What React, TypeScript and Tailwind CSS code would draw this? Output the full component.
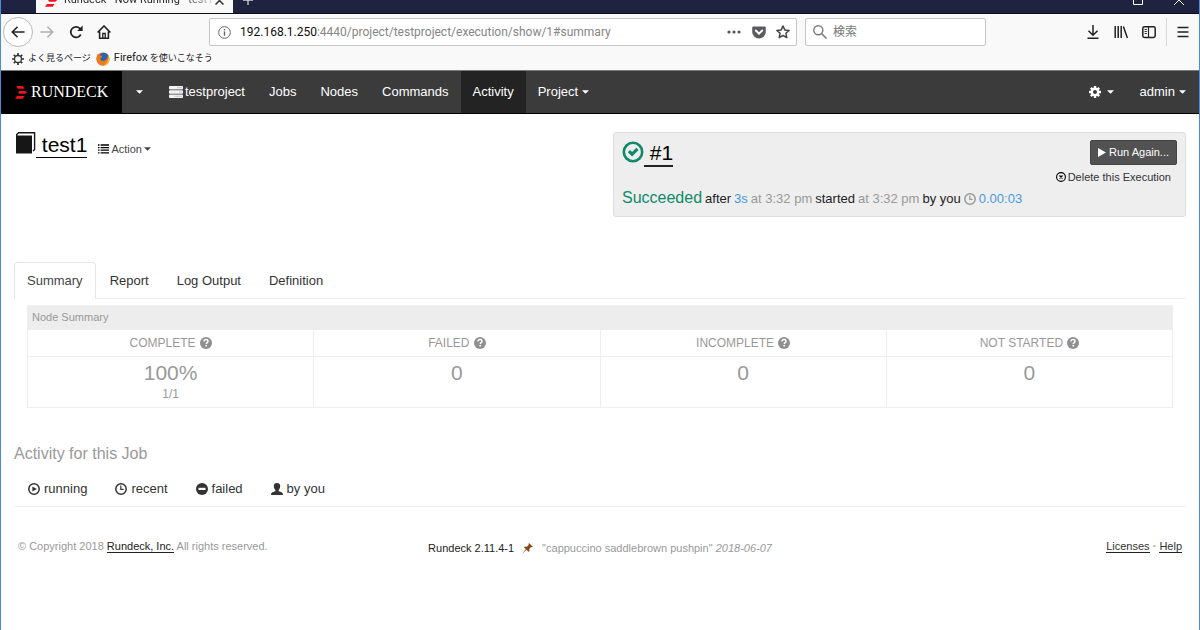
import React from 'react';
import type { ReactNode } from 'react';

type IconProps = { className?: string };

const RundeckMark = ({ className }: IconProps) => (
  <svg className={className} viewBox="0 0 12 13" fill="#f5121d" aria-hidden="true">
    <path d="M1.2 0H7.8L9.6 2.8H3z" />
    <path d="M4.2 5H10.2L12 6.4 10.2 7.8H4.2L3.2 6.4z" />
    <path d="M2 10H9.4L7.8 12.8H0z" />
  </svg>
);

const TasksIcon = ({ className }: IconProps) => (
  <svg className={className} viewBox="0 0 14 12" aria-hidden="true">
    <rect x="0" y="0" width="14" height="3.4" rx="0.8" fill="#f3f3f3" />
    <rect x="0" y="4.3" width="14" height="3.4" rx="0.8" fill="#f3f3f3" />
    <rect x="0" y="8.6" width="14" height="3.4" rx="0.8" fill="#f3f3f3" />
    <path d="M8 1.7h5M10 6H13M5.5 10.3H13" stroke="#b4b4b4" strokeWidth="0.7" />
  </svg>
);

const BookIcon = ({ className }: IconProps) => (
  <svg className={className} viewBox="0 0 20 22" aria-hidden="true">
    <path d="M0 3.5h16V21.5H0z" fill="#161616" />
    <path d="M0.7 4V2.6L2.6 0.8H18.6V17.4L17 19" fill="none" stroke="#161616" strokeWidth="1.4" />
  </svg>
);

const ListIcon = ({ className }: IconProps) => (
  <svg className={className} viewBox="0 0 11 10" fill="none" stroke="currentColor" strokeWidth="1.3" aria-hidden="true">
    <path d="M0 1h1.5M2.6 1H11M0 3.6h1.5M2.6 3.6H11M0 6.2h1.5M2.6 6.2H11M0 8.8h1.5M2.6 8.8H11" />
  </svg>
);

const CheckCircleIcon = ({ className }: IconProps) => (
  <svg className={className} viewBox="0 0 22 22" aria-hidden="true">
    <circle cx="11" cy="11" r="9.2" fill="none" stroke="#0f8a67" strokeWidth="2.6" />
    <path d="M5.8 11.2L8 9l2.1 2L14.4 6.8l2.2 2.1-6.5 6.6z" fill="#0f8a67" />
  </svg>
);

const ClockIcon = ({ className }: IconProps) => (
  <svg className={className} viewBox="0 0 12 12" fill="none" stroke="currentColor" strokeWidth="1.5" aria-hidden="true">
    <circle cx="6" cy="6" r="5.2" />
    <path d="M5.8 2.4v4h2.8" strokeWidth="1.2" />
  </svg>
);

const PlayCircleIcon = ({ className }: IconProps) => (
  <svg className={className} viewBox="0 0 12 12" aria-hidden="true">
    <circle cx="6" cy="6" r="5.2" fill="none" stroke="currentColor" strokeWidth="1.5" />
    <path d="M4.4 3.4L8.8 6 4.4 8.6z" fill="currentColor" />
  </svg>
);

const MinusCircleIcon = ({ className }: IconProps) => (
  <svg className={className} viewBox="0 0 12 12" aria-hidden="true">
    <circle cx="6" cy="6" r="6" fill="currentColor" />
    <path d="M2.5 4.8h7v2.2h-7z" fill="#fff" />
  </svg>
);

const UserIcon = ({ className }: IconProps) => (
  <svg className={className} viewBox="0 0 12 12" fill="currentColor" aria-hidden="true">
    <path d="M6 0C4 0 2.8 1.2 2.8 3c0 1.7.7 3 1.6 3.9v1.3C3.4 8.7.8 9.1.3 10.2L0 12h12l-.3-1.8c-.5-1.1-3.1-1.5-4.1-2V6.9C8.5 6 9.2 4.7 9.2 3 9.2 1.2 8 0 6 0z" />
  </svg>
);

const RemoveCircleIcon = ({ className }: IconProps) => (
  <svg className={className} viewBox="0 0 10 10" fill="none" stroke="currentColor" aria-hidden="true">
    <circle cx="5" cy="5" r="4.4" strokeWidth="1.1" />
    <path d="M3.5 3.5l3 3M6.5 3.5l-3 3" strokeWidth="1.2" />
  </svg>
);

const QuestionIcon = ({ className }: IconProps) => (
  <svg className={className} viewBox="0 0 12 12" aria-hidden="true">
    <circle cx="6" cy="6" r="6" fill="#8f8f8f" />
    <path d="M4 4.5C4 3.2 4.8 2.6 6 2.6s2 .7 2 1.7c0 1.2-1.7 1.3-1.7 2.6" fill="none" stroke="#fff" strokeWidth="1.5" />
    <path d="M5.4 7.9h1.7v1.6H5.4z" fill="#fff" />
  </svg>
);

const CogIcon = ({ className }: IconProps) => (
  <svg className={className} viewBox="0 0 12 12" aria-hidden="true">
    <g stroke="currentColor" strokeWidth="2.4">
      <path d="M6 0v2.5M6 9.5V12M0 6h2.5M9.5 6H12M1.8 1.8l1.7 1.7M8.5 8.5l1.7 1.7M10.2 1.8L8.5 3.5M3.5 8.5l-1.7 1.7" />
      <circle cx="6" cy="6" r="3.2" fill="none" />
    </g>
  </svg>
);

const PushpinIcon = ({ className }: IconProps) => (
  <svg className={className} viewBox="0 0 12 12" fill="#8b4513" aria-hidden="true">
    <path d="M7.6 0L11.8 4.2 10.8 4.6 9.9 4.4 7.9 6.6 8.2 8.9 7.2 9.6 4.9 7.3 0.3 11.8 4.2 6.6 2.2 4.6 3 3.7 5.3 4 7.4 2 7.1 1z" />
  </svg>
);

const FirefoxIcon = ({ className }: IconProps) => (
  <svg className={className} viewBox="0 0 14 14" aria-hidden="true">
    <circle cx="7" cy="7" r="6.6" fill="#e8711c" />
    <circle cx="7.8" cy="5.4" r="4.6" fill="#2a64ad" />
    <path d="M0.6 5C1 3.2 1.6 2.4 2.4 1.6c0 1 .5 1.5 1.4 1.6 1.3.1 2.2.8 2.3 1.7-.9.7-1.9.8-1.7 2 .3 1.8 2.5 2.3 4.4 1.5 1.9-.8 2.9-2.3 2.9-4.4 1.2 1.8 1.4 3.7.6 5.6C11 12.500 8.700 13.600 6.600 13.500 2.800 13.300 0 9.500.6 5z" fill="#ee7a1d" />
    <path d="M12.3 3.4c1.5 2.5 1.5 5.6-.3 7.8-1.2 1.4-2.6 2.1-4.4 2.3 3-1.7 5-4.8 4.7-10.1z" fill="#f9c23c" />
  </svg>
);

const Caret = () => (
  <svg className="h-[4px] w-[7px] shrink-0" viewBox="0 0 7 4" fill="currentColor" aria-hidden="true">
    <path d="M0 0.3h7L3.5 3.8z" />
  </svg>
);

const BrowserTabs = () => (
  <div className="flex h-[14px] items-end overflow-hidden border-b border-[#0c0c20] bg-[#20233f]">
    <div className="-mb-px ml-[35px] flex h-[28px] w-[197px] shrink-0 items-center bg-[#f9f9fa] px-[9px]">
      <RundeckMark className="mr-[7px] h-[13px] w-[12px] shrink-0" />
      <span className="min-w-0 flex-1 overflow-hidden bg-linear-to-r from-[#222] from-80% to-[#ccc] bg-clip-text text-[11px] leading-4 whitespace-nowrap text-transparent">
        Rundeck - Now Running - test1
      </span>
      <button type="button" aria-label="Close tab" className="ml-1">
        <svg className="h-[9px] w-[9px]" viewBox="0 0 9 9" stroke="#333" strokeWidth="1.5"><path d="M0.5 0.5l8 8M8.5 0.5l-8 8" /></svg>
      </button>
    </div>
    <button type="button" aria-label="New tab" className="mb-[8px] ml-[10px]">
      <svg className="h-[10px] w-[10px]" viewBox="0 0 10 10" stroke="#d0d0dc" strokeWidth="1.3"><path d="M5 0v10M0 5h10" /></svg>
    </button>
    <div className="mr-[15px] mb-[8px] ml-auto flex gap-[31px]">
      <button type="button" aria-label="Maximize">
        <svg className="h-[10px] w-[10px]" viewBox="0 0 10 10" fill="none" stroke="#fff"><path d="M0.5 0.5h9v9h-9z" /></svg>
      </button>
      <button type="button" aria-label="Close window">
        <svg className="h-[10px] w-[10px]" viewBox="0 0 10 10" stroke="#fff"><path d="M0 0l10 10M10 0L0 10" /></svg>
      </button>
    </div>
  </div>
);

const BrowserToolbar = () => (
  <div className="flex items-center pt-[3px] text-[#333]">
    <button type="button" aria-label="Back" className="ml-[2px] flex h-[30px] w-[30px] items-center justify-center rounded-full border border-[#b8b8b8] bg-white">
      <svg className="h-[14px] w-[14px]" viewBox="0 0 14 14" fill="none" stroke="#222" strokeWidth="1.6"><path d="M13.5 7H1.5M6.5 1.8L1.3 7l5.2 5.2" /></svg>
    </button>
    <button type="button" aria-label="Forward" className="ml-[7px]">
      <svg className="h-[14px] w-[14px]" viewBox="0 0 14 14" fill="none" stroke="#b1b1b1" strokeWidth="1.6"><path d="M0.5 7h12M7.5 1.8L12.7 7l-5.2 5.2" /></svg>
    </button>
    <button type="button" aria-label="Reload" className="ml-[15px]">
      <svg className="h-[14px] w-[14px]" viewBox="0 0 14 14" fill="none" stroke="#222" strokeWidth="1.7">
        <path d="M11.8 9.5A5.3 5.3 0 1 1 10.8 3.3L12 4.5" />
        <path d="M13.6 0.5v5.4H8.2z" fill="#222" stroke="none" />
      </svg>
    </button>
    <button type="button" aria-label="Home" className="ml-[14px]">
      <svg className="h-[14px] w-[14px]" viewBox="0 0 14 14" fill="none" stroke="#222" strokeWidth="1.6">
        <path d="M0.6 7.5L7 1l6.4 6.5M2.6 6.5v6.7h8.8V6.5" />
        <path d="M5.8 13V8.5h2.4V13" strokeWidth="1.3" />
      </svg>
    </button>

    <div className="ml-[98px] flex h-[28px] w-[588px] items-center rounded-[2px] border border-[#c6c6c6] bg-white text-[12px]">
      <svg className="ml-2 h-[13px] w-[13px] shrink-0" viewBox="0 0 13 13" fill="none" stroke="#666" aria-hidden="true">
        <circle cx="6.5" cy="6.5" r="5.8" />
        <path d="M6.5 5.5v4.3M6.5 3v1.5" strokeWidth="1.4" />
      </svg>
      <label htmlFor="address" className="ml-[9px] text-[#0c0c0d]">192.168.1.250</label>
      <input id="address" type="text" defaultValue=":4440/project/testproject/execution/show/1#summary" className="min-w-0 flex-1 text-[#858585] outline-none" />
      <button type="button" aria-label="Page actions">
        <svg className="h-[4px] w-[14px]" viewBox="0 0 14 4" fill="#555"><circle cx="2" cy="2" r="1.6" /><circle cx="7" cy="2" r="1.6" /><circle cx="12" cy="2" r="1.6" /></svg>
      </button>
      <button type="button" aria-label="Save to Pocket" className="ml-[11px]">
        <svg className="h-[13px] w-[14px]" viewBox="0 0 14 13">
          <path d="M1.5 0.5h11q1.3 0 1.3 1.3V6a6.8 6.5 0 0 1-13.6 0V1.8Q.2.5 1.5.5z" fill="#5c5c5e" />
          <path d="M3.8 4.5L7 7.6l3.2-3.1" fill="none" stroke="#fff" strokeWidth="1.9" strokeLinecap="round" />
        </svg>
      </button>
      <button type="button" aria-label="Bookmark" className="mr-[6px] ml-[10px]">
        <svg className="h-[14px] w-[14px]" viewBox="0 0 14 14" fill="none" stroke="#444" strokeWidth="1.5" strokeLinejoin="round"><path d="M7 1l1.8 3.9 4.3.5-3.2 2.9.9 4.3L7 10.5l-3.8 2.1.9-4.3L.9 5.4l4.3-.5z" /></svg>
      </button>
    </div>

    <div className="ml-[8px] flex h-[28px] w-[181px] items-center rounded-[2px] border border-[#c6c6c6] bg-white">
      <label htmlFor="search" aria-label="検索" className="ml-[7px]">
        <svg className="h-[14px] w-[14px]" viewBox="0 0 14 14" fill="none" stroke="#7d7d7d" strokeWidth="1.5"><circle cx="5.3" cy="5.3" r="4.5" /><path d="M8.6 8.6l5 5" /></svg>
      </label>
      <input id="search" type="text" placeholder="検索" className="ml-[6px] min-w-0 flex-1 text-[12px] outline-none placeholder:text-[#777]" />
    </div>

    <div className="mr-[10px] ml-auto flex items-center gap-[14px]">
      <button type="button" aria-label="Downloads">
        <svg className="h-[14px] w-[14px]" viewBox="0 0 14 14" fill="none" stroke="#222" strokeWidth="1.5"><path d="M7 0v10M2.5 5.8L7 10.3l4.5-4.5M1.5 13.2h11" /></svg>
      </button>
      <button type="button" aria-label="Library">
        <svg className="h-[14px] w-[14px]" viewBox="0 0 14 14" fill="none" stroke="#222" strokeWidth="1.5"><path d="M1.2 1v12M4.2 1v12M7.2 1v12M9.4 1.5l4 11.5" /></svg>
      </button>
      <button type="button" aria-label="Sidebars">
        <svg className="h-[14px] w-[14px]" viewBox="0 0 14 14" fill="none" stroke="#222" strokeWidth="1.5">
          <rect x="0.8" y="1.8" width="12.4" height="10.6" rx="1.6" />
          <path d="M6.5 2v10" strokeWidth="1.2" />
          <path d="M2.5 4.5h2.4M2.5 6.5h2.4M2.5 8.5h2.4" strokeWidth="0.9" />
        </svg>
      </button>
      <div className="-mx-[4px] h-[28px] w-px bg-[#d8d8d8]" />
      <button type="button" aria-label="Menu">
        <svg className="h-[14px] w-[12px]" viewBox="0 0 12 14" stroke="#222" strokeWidth="1.5"><path d="M0.5 2.5h11M0.5 7h11M0.5 11.5h11" /></svg>
      </button>
    </div>
  </div>
);

const BookmarksBar = () => (
  <div className="flex h-[23px] items-center pl-[11px] text-[9px] text-[#222]">
    <a href="#most-visited" className="flex items-center gap-[4px]">
      <svg className="h-[12px] w-[12px]" viewBox="0 0 12 12" fill="none" stroke="#333" aria-hidden="true">
        <circle cx="6" cy="6" r="3.5" strokeWidth="1.3" />
        <path d="M6 0v2.5M6 9.5V12M0 6h2.5M9.5 6H12M1.8 1.8l1.7 1.7M8.5 8.5l1.7 1.7M10.2 1.8L8.5 3.5M3.5 8.5l-1.7 1.7" strokeWidth="1.7" />
      </svg>
      よく見るページ
    </a>
    <a href="#firefox" className="ml-[5px] flex items-center gap-[4px]">
      <FirefoxIcon className="h-[14px] w-[14px]" />
      <span><span className="text-[11px]">Firefox</span> を使いこなそう</span>
    </a>
  </div>
);

const navLinks = ['Jobs', 'Nodes', 'Commands', 'Activity'];

const Navbar = () => (
  <nav className="flex h-[44px] items-stretch border-t border-b border-t-[#777] border-b-black bg-[#3b3b3b] text-[13px] text-white">
    <a href="#home" className="flex w-[121px] items-center gap-[4px] bg-black pl-[14px] font-['Liberation_Serif',serif] text-[16px]">
      <RundeckMark className="h-[13px] w-[12px]" />
      RUNDECK
    </a>
    <button type="button" aria-label="Projects" className="px-[14px]"><Caret /></button>
    <a href="#project" className="flex items-center gap-[2px] px-[12px]">
      <TasksIcon className="h-[12px] w-[14px]" />
      testproject
    </a>
    {navLinks.map(label => (
      <a
        key={label}
        href={`#${label.toLowerCase()}`}
        className={`flex items-center px-[12px] ${label === 'Activity' ? 'bg-[#232323]' : ''}`}
      >
        {label}
      </a>
    ))}
    <button type="button" className="flex items-center gap-[4px] px-[12px]">Project <Caret /></button>
    <button type="button" aria-label="Settings" className="ml-auto flex items-center gap-[6px] px-[13px]">
      <CogIcon className="h-[12px] w-[12px]" />
      <Caret />
    </button>
    <button type="button" className="flex items-center gap-[4px] px-[13px]">admin <Caret /></button>
  </nav>
);

const ExecutionPanel = () => (
  <section className="rounded-[3px] border border-[#ddd] bg-[#eee] px-[8px] py-[7px]">
    <div className="flex items-start justify-between">
      <a href="#execution" className="flex items-start pt-[1px] text-[21px] text-black">
        <CheckCircleIcon className="h-[22px] w-[22px]" />
        <span className="border-b-2 border-[#222] leading-6 whitespace-pre"> #1</span>
      </a>
      <div className="flex flex-col items-end text-[11px]">
        <button type="button" className="flex h-[25px] items-center gap-[3px] rounded-[2px] border border-[#444] bg-[#525252] px-[7px] text-white">
          <svg className="h-[9px] w-[8px]" viewBox="0 0 8 9" fill="#fff" aria-hidden="true"><path d="M0 0l8 4.5L0 9z" /></svg>
          Run Again...
        </button>
        <button type="button" className="mt-[4px] mr-[6px] flex items-center gap-[2px] leading-4 text-[#333]">
          <RemoveCircleIcon className="h-[10px] w-[10px] text-black" />
          Delete this Execution
        </button>
      </div>
    </div>
    <p className="mt-[3px] flex items-baseline gap-[3px] leading-5 whitespace-nowrap text-[#999]">
      <span className="text-[16px] text-[#0f8a67]">Succeeded</span>
      <span className="text-[#222]">after</span>
      <span className="text-[#4a9ae0]">3s</span>
      <span>at 3:32 pm</span>
      <span className="text-[#222]">started</span>
      <span>at 3:32 pm</span>
      <span className="text-[#222]">by you</span>
      <ClockIcon className="h-[12px] w-[12px] self-center" />
      <span className="text-[#4a9ae0]">0.00:03</span>
    </p>
  </section>
);

const tabs = ['Report', 'Log Output', 'Definition'];

const Tabs = () => (
  <div role="tablist" className="mt-[45px] flex h-[37px] border-b border-[#eee] text-[#444]">
    <button type="button" role="tab" aria-selected="true" className="-mb-px rounded-t-[4px] border border-b-0 border-[#e6e6e6] bg-white px-[12px]">
      Summary
    </button>
    <div className="flex pt-px">
      {tabs.map(tab => (
        <button key={tab} type="button" role="tab" aria-selected="false" className="px-[14px] text-[#333]">{tab}</button>
      ))}
    </div>
  </div>
);

const summary = [
  { label: 'COMPLETE', value: '100%', detail: '1/1' },
  { label: 'FAILED', value: '0' },
  { label: 'INCOMPLETE', value: '0' },
  { label: 'NOT STARTED', value: '0' },
];

const NodeSummary = () => (
  <div className="mx-[13px] mt-[6px]">
    <table className="w-full table-fixed border-collapse border border-[#eee] text-[12px] text-[#999]">
      <thead>
        <tr className="h-[24px] bg-[#ededed]">
          <th colSpan={4} className="px-[4px] text-left text-[11px] font-normal">Node Summary</th>
        </tr>
        <tr className="h-[27px]">
          {summary.map(s => (
            <th key={s.label} className="border border-[#eee] font-normal">
              <span className="inline-flex items-center gap-[4px]">
                {s.label}
                <QuestionIcon className="h-[12px] w-[12px]" />
              </span>
            </th>
          ))}
        </tr>
      </thead>
      <tbody>
        <tr className="h-[51px]">
          {summary.map(s => (
            <td key={s.label} className="border border-[#eee] pt-[4px] text-center align-top">
              <div className="text-[21px] leading-6">{s.value}</div>
              {s.detail && <div className="leading-[18px]">{s.detail}</div>}
            </td>
          ))}
        </tr>
      </tbody>
    </table>
  </div>
);

const activityFilters: { label: string; icon: ReactNode }[] = [
  { label: 'running', icon: <PlayCircleIcon className="h-[12px] w-[12px]" /> },
  { label: 'recent', icon: <ClockIcon className="h-[12px] w-[12px]" /> },
  { label: 'failed', icon: <MinusCircleIcon className="h-[12px] w-[12px]" /> },
  { label: 'by you', icon: <UserIcon className="h-[12px] w-[12px]" /> },
];

const Footer = () => (
  <footer className="mt-[29px] flex items-start justify-between px-[4px] text-[11px] leading-5 text-[#999]">
    <p className="flex-1">
      © Copyright 2018 <a href="#rundeck" className="border-b border-[#222] text-[#222]">Rundeck, Inc.</a> All rights reserved.
    </p>
    <p className="flex items-center pt-[2px]">
      <span className="text-[#222]">Rundeck 2.11.4-1</span>
      <PushpinIcon className="mr-[9px] ml-[8px] h-[11px] w-[11px]" />
      <span>"cappuccino saddlebrown pushpin" <em>2018-06-07</em></span>
    </p>
    <p className="flex-1 text-right">
      <a href="#licenses" className="border-b border-[#222] text-[#333]">Licenses</a>
      <span className="font-bold"> · </span>
      <a href="#help" className="border-b border-[#222] text-[#333]">Help</a>
    </p>
  </footer>
);

const App = () => {
  return (
    <div className="min-h-screen border-x border-[#4a8cd8] bg-white font-['Liberation_Sans',Arial,sans-serif] text-[13px]">
      <header className="bg-[#f9f9fa] font-[Roboto,'Noto_Sans_CJK_JP',sans-serif]">
        <BrowserTabs />
        <BrowserToolbar />
        <BookmarksBar />
      </header>
      <Navbar />

      <main className="px-[13px] pt-[18px]">
        <div className="grid grid-cols-2 gap-[26px]">
          <div className="flex items-start">
            <a href="#job" className="flex items-start pl-[2px] text-[21px] text-black">
              <BookIcon className="h-[22px] w-[20px]" />
              <span className="border-b border-black pt-px leading-6 whitespace-pre"> test1</span>
            </a>
            <button type="button" className="mt-[9px] ml-[11px] flex items-center text-[11px] leading-4 text-[#444]">
              <ListIcon className="mr-[2px] h-[10px] w-[11px] text-black" />
              <span className="mr-[2px]">Action</span>
              <Caret />
            </button>
          </div>
          <ExecutionPanel />
        </div>

        <Tabs />
        <NodeSummary />

        <h2 className="mt-[36px] text-[16px] leading-5 text-[#999]">Activity for this Job</h2>
        <div className="mt-[15px] flex gap-[28px] border-b border-[#eee] pb-[7px] pl-[14px]">
          {activityFilters.map(filter => (
            <a key={filter.label} href={`#${filter.label}`} className="flex items-center gap-[4px] leading-5 text-[#333]">
              {filter.icon}
              {filter.label}
            </a>
          ))}
        </div>

        <Footer />
      </main>
    </div>
  );
};

export default App;
